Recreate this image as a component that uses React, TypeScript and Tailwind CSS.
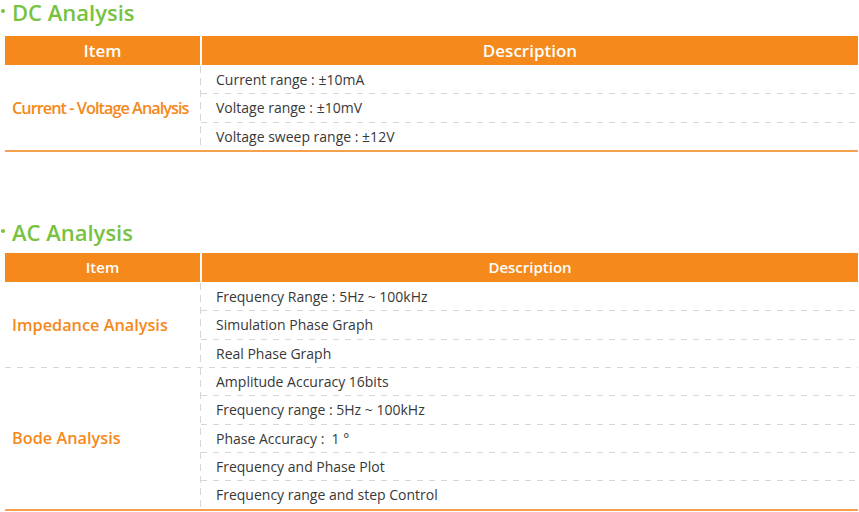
type Group = {
  item: string
  rows: string[]
}

type Section = {
  title: string
  headSize: string
  itemTight?: boolean
  groups: Group[]
}

const sections: Section[] = [
  {
    title: "DC Analysis",
    headSize: "text-[17px]",
    itemTight: true,
    groups: [
      {
        item: "Current - Voltage Analysis",
        rows: ["Current range : ±10mA", "Voltage range : ±10mV", "Voltage sweep range : ±12V"],
      },
    ],
  },
  {
    title: "AC Analysis",
    headSize: "text-[15px]",
    groups: [
      {
        item: "Impedance Analysis",
        rows: ["Frequency Range : 5Hz ~ 100kHz", "Simulation Phase Graph", "Real Phase Graph"],
      },
      {
        item: "Bode Analysis",
        rows: [
          "Amplitude Accuracy 16bits",
          "Frequency range : 5Hz ~ 100kHz",
          "Phase Accuracy :  1 °",
          "Frequency and Phase Plot",
          "Frequency range and step Control",
        ],
      },
    ],
  },
]

function HDash() {
  return <div className="h-px w-full bg-[repeating-linear-gradient(to_right,#d6d6d6_0_6px,transparent_6px_12px)]" />
}

function Title({ text }: { text: string }) {
  return (
    <h2 className="flex h-[24px] items-start pt-px text-[22px] leading-[23px] font-semibold text-[#78c23f]">
      <span className="mt-[8px] mr-[7px] ml-px h-[4px] w-[4px] shrink-0 rounded-full bg-[#78c23f]" />
      {text}
    </h2>
  )
}

function SpecTable({ section }: { section: Section }) {
  return (
    <div className="mr-px ml-[5px]">
      <div className={`flex h-[29px] bg-[#f5891b] font-semibold text-white ${section.headSize}`}>
        <div className="flex w-[195px] items-center justify-center">Item</div>
        <div className="flex flex-1 items-center justify-center border-l-2 border-white">Description</div>
      </div>
      <div className="mt-px">
        {section.groups.map((g, gi) => (
          <div key={g.item}>
            {gi > 0 && <HDash />}
            <div className="flex">
              <div
                className={`flex w-[195px] items-center pl-[7px] text-[16.3px] font-semibold text-[#f5891b] ${
                  section.itemTight ? "tracking-[-0.06em]" : ""
                }`}
              >
                {g.item}
              </div>
              <div className="w-px bg-[repeating-linear-gradient(to_bottom,#d6d6d6_0_7px,transparent_7px_12px)]" />
              <div className="flex-1">
                {g.rows.map((r, ri) => (
                  <div key={ri}>
                    {ri > 0 && <HDash />}
                    <div className="flex h-[27.33px] items-center pl-[15px] text-[14px] whitespace-pre text-[#383838]">
                      {r}
                    </div>
                  </div>
                ))}
              </div>
            </div>
          </div>
        ))}
      </div>
      <div className="h-[2px] bg-[#f5a04d]" />
    </div>
  )
}

export default function App() {
  return (
    <div className="h-[512px] w-[859px] overflow-hidden bg-white font-['Open_Sans',sans-serif]">
      <Title text={sections[0].title} />
      <div className="mt-[12px]">
        <SpecTable section={sections[0]} />
      </div>
      <div className="mt-[68px]">
        <Title text={sections[1].title} />
      </div>
      <div className="mt-[9px]">
        <SpecTable section={sections[1]} />
      </div>
    </div>
  )
}
